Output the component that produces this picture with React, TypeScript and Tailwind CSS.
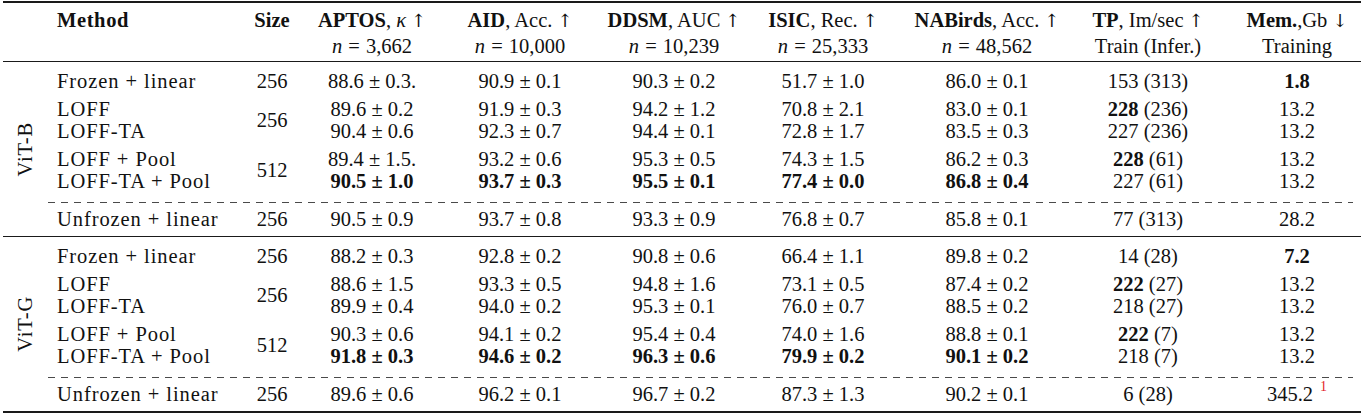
type Cell = { v: string; b?: boolean };
type Row = {
  method: string;
  vals: Cell[];
  tp: [string, string, boolean?];
  mem: Cell;
  note?: boolean;
};
type Block = { size: string; rows: Row[] };

const cols =
  "grid grid-cols-[179px_90px_110px_186px_122px_176px_152px_170px_128px] auto-rows-[22px] leading-[22px]";

const c = (v: string, b?: boolean): Cell => ({ v, b });

const vitB: Block[] = [
  {
    size: "256",
    rows: [
      {
        method: "Frozen + linear",
        vals: [c("88.6 ± 0.3."), c("90.9 ± 0.1"), c("90.3 ± 0.2"), c("51.7 ± 1.0"), c("86.0 ± 0.1")],
        tp: ["153", "(313)"],
        mem: c("1.8", true),
      },
    ],
  },
  {
    size: "256",
    rows: [
      {
        method: "LOFF",
        vals: [c("89.6 ± 0.2"), c("91.9 ± 0.3"), c("94.2 ± 1.2"), c("70.8 ± 2.1"), c("83.0 ± 0.1")],
        tp: ["228", "(236)", true],
        mem: c("13.2"),
      },
      {
        method: "LOFF-TA",
        vals: [c("90.4 ± 0.6"), c("92.3 ± 0.7"), c("94.4 ± 0.1"), c("72.8 ± 1.7"), c("83.5 ± 0.3")],
        tp: ["227", "(236)"],
        mem: c("13.2"),
      },
    ],
  },
  {
    size: "512",
    rows: [
      {
        method: "LOFF + Pool",
        vals: [c("89.4 ± 1.5."), c("93.2 ± 0.6"), c("95.3 ± 0.5"), c("74.3 ± 1.5"), c("86.2 ± 0.3")],
        tp: ["228", "(61)", true],
        mem: c("13.2"),
      },
      {
        method: "LOFF-TA + Pool",
        vals: [
          c("90.5 ± 1.0", true),
          c("93.7 ± 0.3", true),
          c("95.5 ± 0.1", true),
          c("77.4 ± 0.0", true),
          c("86.8 ± 0.4", true),
        ],
        tp: ["227", "(61)"],
        mem: c("13.2"),
      },
    ],
  },
  {
    size: "256",
    rows: [
      {
        method: "Unfrozen + linear",
        vals: [c("90.5 ± 0.9"), c("93.7 ± 0.8"), c("93.3 ± 0.9"), c("76.8 ± 0.7"), c("85.8 ± 0.1")],
        tp: ["77", "(313)"],
        mem: c("28.2"),
      },
    ],
  },
];

const vitG: Block[] = [
  {
    size: "256",
    rows: [
      {
        method: "Frozen + linear",
        vals: [c("88.2 ± 0.3"), c("92.8 ± 0.2"), c("90.8 ± 0.6"), c("66.4 ± 1.1"), c("89.8 ± 0.2")],
        tp: ["14", "(28)"],
        mem: c("7.2", true),
      },
    ],
  },
  {
    size: "256",
    rows: [
      {
        method: "LOFF",
        vals: [c("88.6 ± 1.5"), c("93.3 ± 0.5"), c("94.8 ± 1.6"), c("73.1 ± 0.5"), c("87.4 ± 0.2")],
        tp: ["222", "(27)", true],
        mem: c("13.2"),
      },
      {
        method: "LOFF-TA",
        vals: [c("89.9 ± 0.4"), c("94.0 ± 0.2"), c("95.3 ± 0.1"), c("76.0 ± 0.7"), c("88.5 ± 0.2")],
        tp: ["218", "(27)"],
        mem: c("13.2"),
      },
    ],
  },
  {
    size: "512",
    rows: [
      {
        method: "LOFF + Pool",
        vals: [c("90.3 ± 0.6"), c("94.1 ± 0.2"), c("95.4 ± 0.4"), c("74.0 ± 1.6"), c("88.8 ± 0.1")],
        tp: ["222", "(7)", true],
        mem: c("13.2"),
      },
      {
        method: "LOFF-TA + Pool",
        vals: [
          c("91.8 ± 0.3", true),
          c("94.6 ± 0.2", true),
          c("96.3 ± 0.6", true),
          c("79.9 ± 0.2", true),
          c("90.1 ± 0.2", true),
        ],
        tp: ["218", "(7)"],
        mem: c("13.2"),
      },
    ],
  },
  {
    size: "256",
    rows: [
      {
        method: "Unfrozen + linear",
        vals: [c("89.6 ± 0.6"), c("96.2 ± 0.1"), c("96.7 ± 0.2"), c("87.3 ± 1.3"), c("90.2 ± 0.1")],
        tp: ["6", "(28)"],
        mem: c("345.2"),
        note: true,
      },
    ],
  },
];

const Mid = ({ children, className = "" }: { children: React.ReactNode; className?: string }) => (
  <div className={`flex justify-center whitespace-nowrap ${className}`}>{children}</div>
);

const BlockRows = ({ block, className = "" }: { block: Block; className?: string }) => (
  <div className={`${cols} ${className}`}>
    {block.rows.map((r, i) => (
      <div key={r.method} className="contents">
        <div className="whitespace-nowrap pl-[9px] tracking-[0.045em]">{r.method}</div>
        {i === 0 && (
          <Mid className={`items-center ${block.rows.length === 2 ? "row-span-2" : ""}`}>{block.size}</Mid>
        )}
        {r.vals.map((v, j) => (
          <Mid key={j} className={v.b ? "font-bold" : ""}>
            {v.v}
          </Mid>
        ))}
        <Mid>
          <span className={r.tp[2] ? "font-bold" : ""}>{r.tp[0]}</span>&nbsp;{r.tp[1]}
        </Mid>
        <Mid className={r.mem.b ? "font-bold" : ""}>
          {r.mem.v}
          {r.note && <span className="ml-[7px] -mt-[6px] text-[14px] leading-[20px] text-[#e3262b]">1</span>}
        </Mid>
      </div>
    ))}
  </div>
);

const Section = ({ label, blocks, last }: { label: string; blocks: Block[]; last?: boolean }) => (
  <div className={`flex ${last ? "border-b-2 border-[#1a1a1a]" : "border-b border-[#1a1a1a]"}`}>
    <div className="flex w-[45px] items-center justify-center">
      <span className="rotate-180 whitespace-nowrap leading-none [writing-mode:vertical-rl] tracking-[0.04em]">
        {label}
      </span>
    </div>
    <div className="flex flex-1 flex-col pt-[8px] pb-[6px]">
      <BlockRows block={blocks[0]} />
      <BlockRows block={blocks[1]} className="mt-[6px]" />
      <BlockRows block={blocks[2]} className="mt-[6px]" />
      <div className="mt-[10px] mb-[5px] mr-[8px] h-px bg-[image:repeating-linear-gradient(to_right,#4a4a4a_0_7px,transparent_7px_13px)]" />
      <BlockRows block={blocks[3]} />
    </div>
  </div>
);

const Arrow = ({ d }: { d: string }) => (
  <span className="ml-[5px] font-['DejaVu_Serif',serif] text-[18px] font-normal">{d}</span>
);

const Head = ({ title, rest, sub }: { title: string; rest: React.ReactNode; sub: React.ReactNode }) => (
  <div className="flex flex-col items-center whitespace-nowrap">
    <div className="flex h-[22px] justify-center">
      <span className="font-bold">{title}</span>
      {rest}
    </div>
    <div className="mt-[4px] flex h-[22px] justify-center">{sub}</div>
  </div>
);

const N = ({ v }: { v: string }) => (
  <span>
    <i>n</i>
    <span className="mx-[0.3em]">=</span>
    {v}
  </span>
);

export default function App() {
  return (
    <div className="h-[415px] w-[1363px] bg-white font-['Liberation_Serif',serif] text-[20.5px] text-[#111]">
      <div className="ml-[3px] mt-[1px] w-[1358px] border-t-2 border-[#1a1a1a]">
        <div className="flex border-b border-[#1a1a1a] pt-[6px] pb-[4px] leading-[22px]">
          <div className="w-[45px]" />
          <div className="grid flex-1 grid-cols-[179px_90px_110px_186px_122px_176px_152px_170px_128px]">
            <div className="pl-[9px] font-bold tracking-[0.03em]">Method</div>
            <Mid className="font-bold">Size</Mid>
            <Head title="APTOS" rest={<span>, <i>κ</i><Arrow d="↑" /></span>} sub={<N v="3,662" />} />
            <Head title="AID" rest={<span>, Acc.<Arrow d="↑" /></span>} sub={<N v="10,000" />} />
            <Head title="DDSM" rest={<span>, AUC<Arrow d="↑" /></span>} sub={<N v="10,239" />} />
            <Head title="ISIC" rest={<span>, Rec.<Arrow d="↑" /></span>} sub={<N v="25,333" />} />
            <Head title="NABirds" rest={<span>, Acc.<Arrow d="↑" /></span>} sub={<N v="48,562" />} />
            <Head title="TP" rest={<span>, Im/sec<Arrow d="↑" /></span>} sub={<span>Train (Infer.)</span>} />
            <Head title="Mem." rest={<span>,Gb<Arrow d="↓" /></span>} sub={<span>Training</span>} />
          </div>
        </div>
        <Section label="ViT-B" blocks={vitB} />
        <Section label="ViT-G" blocks={vitG} last />
      </div>
    </div>
  );
}
